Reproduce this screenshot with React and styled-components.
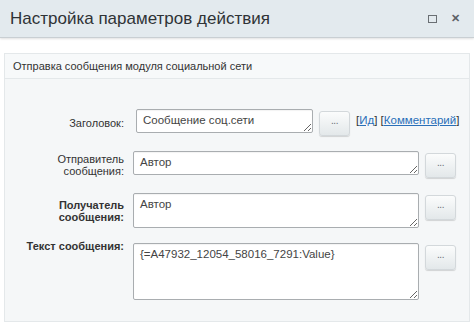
import React from "react";
import styled, { createGlobalStyle } from "styled-components";

const Global = createGlobalStyle`
  body {
    margin: 0;
    background: #fff;
    font-family: "Liberation Sans", Arial, sans-serif;
  }
`;

const fields = [
  { label: "Отправитель сообщения:", value: "Автор", height: 24 },
  { label: "Получатель сообщения:", value: "Автор", height: 35, bold: true },
  { label: "Текст сообщения:", value: "{=A47932_12054_58016_7291:Value}", height: 57, bold: true, top: true },
];

export default function App() {
  return (
    <Dialog>
      <Global />
      <TitleBar>
        <h1>Настройка параметров действия</h1>
        <div className="controls">
          <span className="max" />
          <span className="close">✕</span>
        </div>
      </TitleBar>
      <Content>
        <Panel>
          <PanelHead>Отправка сообщения модуля социальной сети</PanelHead>
          <Form>
            <Label>Заголовок:</Label>
            <Field>
              <Input $width={177} $height={24} $shift={3} defaultValue="Сообщение соц.сети" readOnly />
              <DotsButton>...</DotsButton>
              <Links>
                [<a href="#">Ид</a>] [<a href="#">Комментарий</a>]
              </Links>
            </Field>
            {fields.map((f) => (
              <React.Fragment key={f.label}>
                <Label $bold={f.bold} $top={f.top}>{f.label}</Label>
                <Field>
                  <Input $width={286} $height={f.height} defaultValue={f.value} readOnly />
                  <DotsButton>...</DotsButton>
                </Field>
              </React.Fragment>
            ))}
          </Form>
        </Panel>
      </Content>
    </Dialog>
  );
}

const Dialog = styled.div`
  width: 474px;
  height: 329px;
  overflow: hidden;
  background: #fff;
`;

const TitleBar = styled.div`
  height: 37px;
  display: flex;
  align-items: center;
  justify-content: space-between;
  padding: 0 14px 0 10px;
  background: #e3eaee;
  border-bottom: 1px solid #c9cfd3;
  box-shadow: 0 1px 2px rgba(0, 0, 0, 0.12);
  h1 {
    margin: 0;
    font-weight: normal;
    font-size: 17px;
    color: #2f3336;
  }
  .controls {
    display: flex;
    align-items: center;
    gap: 14px;
  }
  .max {
    width: 7px;
    height: 6px;
    border: 1px solid #6a6f73;
  }
  .close {
    font-size: 11px;
    color: #5c6166;
    line-height: 1;
    font-weight: bold;
  }
`;

const Content = styled.div`
  padding: 15px 4px 0 4px;
`;

const Panel = styled.div`
  height: 269px;
  border: 1px solid #e4e8ea;
  background: #f5f7f8;
  box-sizing: border-box;
`;

const PanelHead = styled.div`
  height: 24px;
  display: flex;
  align-items: center;
  padding-left: 8px;
  font-size: 11px;
  color: #333;
  border-bottom: 1px solid #e4e8ea;
  background: #f7f9fa;
`;

const Form = styled.div`
  display: grid;
  grid-template-columns: 119px 1fr;
  column-gap: 9px;
  row-gap: 15px;
  padding: 30px 0 0 0;
`;

const Label = styled.div`
  text-align: right;
  font-size: 11px;
  line-height: 12px;
  color: #333;
  font-weight: ${(p) => (p.$bold ? "bold" : "normal")};
  align-self: ${(p) => (p.$top ? "start" : "center")};
  margin-top: ${(p) => (p.$top ? "-3px" : "0")};
`;

const Field = styled.div`
  display: flex;
  align-items: flex-start;
  gap: 6px;
`;

const Input = styled.textarea`
  box-sizing: border-box;
  width: ${(p) => p.$width}px;
  height: ${(p) => p.$height}px;
  margin-left: ${(p) => p.$shift || 0}px;
  padding: 3px 6px;
  border: 1px solid #a9adb0;
  border-radius: 2px;
  background: #fff;
  font-family: "Liberation Sans", Arial, sans-serif;
  font-size: 11.5px;
  line-height: 14px;
  color: #444;
  resize: both;
  outline: none;
  overflow: hidden;
  box-shadow: inset 0 1px 1px rgba(0, 0, 0, 0.05);
`;

const DotsButton = styled.button`
  width: 31px;
  height: 25px;
  margin-top: 2px;
  padding: 0 0 6px;
  border: 1px solid #d3d8db;
  border-radius: 3px;
  background: linear-gradient(#fbfcfc, #e3e8ea);
  box-shadow: 0 1px 1px rgba(0, 0, 0, 0.15);
  font-family: "Liberation Sans", Arial, sans-serif;
  font-size: 10px;
  color: #6a6f74;
  letter-spacing: -0.5px;
`;

const Links = styled.span`
  margin-top: 5px;
  font-size: 11.5px;
  color: #333;
  white-space: nowrap;
  a {
    color: #2a6fb8;
    text-decoration: underline;
  }
`;
